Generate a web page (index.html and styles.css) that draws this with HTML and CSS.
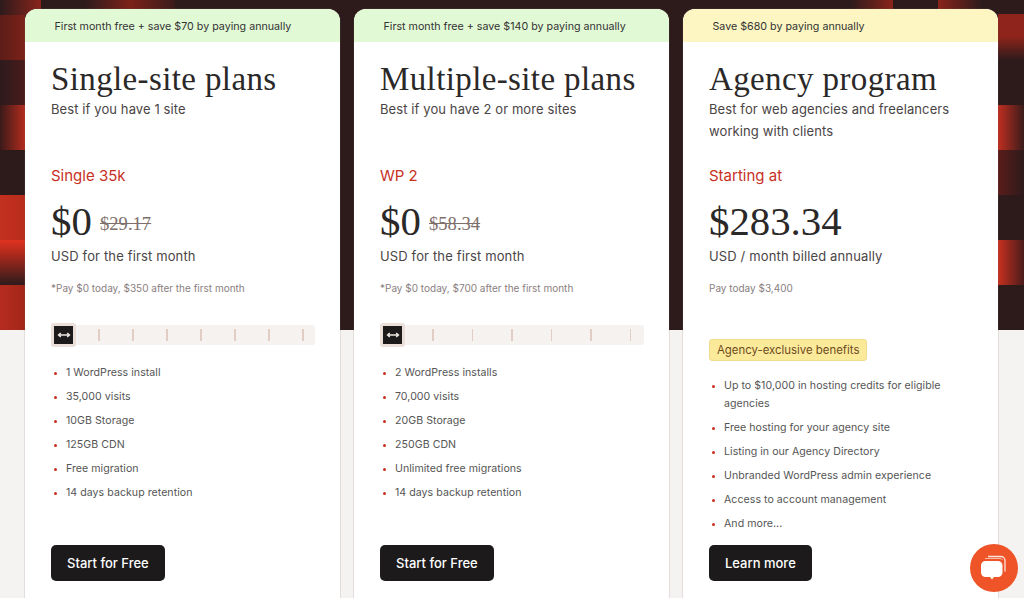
FILE: index.html
```html
<!DOCTYPE html>
<html lang="en">
<head>
<meta charset="utf-8">
<title>Pricing plans</title>
<link rel="stylesheet" href="styles.css">
</head>
<body>
<div class="hero-bg"></div>
<main class="plans">
  <section class="card">
    <p class="banner banner-green">First month free + save $70 by paying annually</p>
    <div class="body">
      <h2 class="title">Single-site plans</h2>
      <p class="sub">Best if you have 1 site</p>
      <p class="label">Single 35k</p>
      <p class="price">$0 <s class="was">$29.17</s></p>
      <p class="period">USD for the first month</p>
      <p class="note">*Pay $0 today, $350 after the first month</p>
      <div class="slider">
        <span class="thumb"><svg width="14" height="8" viewBox="0 0 14 8"><path d="M2.5 4h9M3.800 2 1.500 4l2.300 2M10.200 2l2.300 2-2.300 2" fill="none" stroke="#efe6e1" stroke-width="1.4"/></svg></span>
        <span class="ticks"><i></i><i></i><i></i><i></i><i></i><i></i><i></i></span>
      </div>
      <ul class="features">
        <li>1 WordPress install</li>
        <li>35,000 visits</li>
        <li>10GB Storage</li>
        <li>125GB CDN</li>
        <li>Free migration</li>
        <li>14 days backup retention</li>
      </ul>
      <a class="cta">Start for Free</a>
    </div>
  </section>
  <section class="card">
    <p class="banner banner-green">First month free + save $140 by paying annually</p>
    <div class="body">
      <h2 class="title">Multiple-site plans</h2>
      <p class="sub">Best if you have 2 or more sites</p>
      <p class="label">WP 2</p>
      <p class="price">$0 <s class="was">$58.34</s></p>
      <p class="period">USD for the first month</p>
      <p class="note">*Pay $0 today, $700 after the first month</p>
      <div class="slider">
        <span class="thumb"><svg width="14" height="8" viewBox="0 0 14 8"><path d="M2.5 4h9M3.800 2 1.500 4l2.300 2M10.200 2l2.300 2-2.300 2" fill="none" stroke="#efe6e1" stroke-width="1.4"/></svg></span>
        <span class="ticks ticks-wide"><i></i><i></i><i></i><i></i><i></i><i></i></span>
      </div>
      <ul class="features">
        <li>2 WordPress installs</li>
        <li>70,000 visits</li>
        <li>20GB Storage</li>
        <li>250GB CDN</li>
        <li>Unlimited free migrations</li>
        <li>14 days backup retention</li>
      </ul>
      <a class="cta">Start for Free</a>
    </div>
  </section>
  <section class="card">
    <p class="banner banner-yellow">Save $680 by paying annually</p>
    <div class="body">
      <h2 class="title">Agency program</h2>
      <p class="sub">Best for web agencies and freelancers working with clients</p>
      <p class="label">Starting at</p>
      <p class="price">$283.34</p>
      <p class="period">USD / month billed annually</p>
      <p class="note">Pay today $3,400</p>
      <div class="badge-row"><span class="badge">Agency-exclusive benefits</span></div>
      <ul class="features features-agency">
        <li>Up to $10,000 in hosting credits for eligible agencies</li>
        <li>Free hosting for your agency site</li>
        <li>Listing in our Agency Directory</li>
        <li>Unbranded WordPress admin experience</li>
        <li>Access to account management</li>
        <li>And more...</li>
      </ul>
      <a class="cta">Learn more</a>
    </div>
  </section>
</main>
<button class="chat" aria-label="Chat">
  <svg width="30" height="30" viewBox="0 0 30 30">
    <path d="M9 3.500h13a4 4 0 0 1 4 4v11" fill="none" stroke="#fff" stroke-width="1.3" opacity=".85"/>
    <path d="M6 5.500h15a3 3 0 0 1 2.500 1.500" fill="none" stroke="#fff" stroke-width="1" opacity=".6"/>
    <path d="M6.500 8h12.500a4.500 4.500 0 0 1 4.500 4.500v7a4.500 4.500 0 0 1-4.500 4.500h-4l-2 2.500-2-2.500h-4.500a4.500 4.500 0 0 1-4.500-4.500v-7a4.500 4.500 0 0 1 4.500-4.500z" fill="#fff"/>
  </svg>
</button>
</body>
</html>
```
FILE: styles.css
```css
* { box-sizing: border-box; }
html, body { margin: 0; height: 598px; overflow: hidden; }
body {
  position: relative;
  background: #f5f3f1;
  font-family: Inter, "Liberation Sans", sans-serif;
  color: #4a4545;
}
p, h2, ul { margin: 0; padding: 0; }

.hero-bg {
  position: absolute;
  top: 0; left: 0; right: 0;
  height: 330px;
  background-color: #2d1b1c;
  background-repeat: no-repeat;
  background-image:
    linear-gradient(to right, #2d1b1c, #8a241b),
    linear-gradient(to right, #2d1b1c, #7c2219),
    linear-gradient(to right, #7c2219, #3a1b1b),
    linear-gradient(to right, #5c1d18, #7c2219),
    linear-gradient(to right, #2d1b1c, #4a1c1b),
    linear-gradient(to right, #3a1a1a, #b42c1e),
    linear-gradient(to right, #c4301f, #b82c1c),
    linear-gradient(to bottom, #e0321f, #b02a1c 30%, #2d1b1c),
    linear-gradient(to right, #b52c1f, #a32619),
    linear-gradient(to right, #2d1b1c, #8a241b),
    linear-gradient(to right, #8a241b, #2d1b1c),
    linear-gradient(to bottom, #8e241b 50%, #2d1b1c),
    linear-gradient(to right, #c02e1f, #3a1c1c),
    linear-gradient(to right, #5a1c1a, #2d1b1c),
    linear-gradient(to right, #c8301f, #4a1c1b);
  background-size:
    41px 15px,
    45px 10px,
    45px 10px,
    25px 45px,
    25px 45px,
    25px 45px,
    25px 45px,
    25px 45px,
    25px 45px,
    43px 10px,
    44px 10px,
    26px 46px,
    26px 45px,
    26px 45px,
    26px 45px;
  background-position:
    0 0,
    85px 0,
    130px 0,
    0 15px,
    0 60px,
    0 105px,
    0 195px,
    0 240px,
    0 285px,
    850px 0,
    938px 0,
    998px 14px,
    998px 105px,
    998px 150px,
    998px 240px;
}

.plans {
  position: relative;
  display: grid;
  grid-template-columns: repeat(3, 315px);
  gap: 14px;
  padding: 9px 0 0 25px;
}
.card {
  height: 640px;
  background: #fff;
  border-radius: 12px 12px 0 0;
  overflow: hidden;
  display: flex;
  flex-direction: column;
  box-shadow: 0 0 0 1px rgba(120, 100, 95, .14);
}
.banner {
  height: 33px;
  flex: none;
  padding-left: 29.500px;
  font-size: 10.700px;
  line-height: 35px;
  color: #333;
}
.banner-green { background: #e2f9d6; }
.banner-yellow { background: #fdf6c2; }

.body {
  flex: 1;
  display: flex;
  flex-direction: column;
  padding: 0 26px 68px;
}
.title {
  margin-top: 18px;
  font-family: "Liberation Serif", serif;
  font-weight: 400;
  font-size: 33px;
  line-height: 38px;
  letter-spacing: .38px;
  color: #2b2828;
}
.sub {
  height: 68px;
  font-size: 13px;
  line-height: 22px;
  letter-spacing: .1px;
  color: #4a4545;
}
.label {
  font-size: 15px;
  line-height: 20px;
  color: #c8301f;
}
.price {
  margin-top: 13px;
  font-family: "Liberation Serif", serif;
  font-size: 40.800px;
  line-height: 46px;
  color: #2b2828;
}
.was {
  margin-left: -2px;
  font-size: 18.600px;
  line-height: 1;
  vertical-align: 5px;
  color: #7d6f6a;
}
.period {
  margin-top: 1px;
  font-size: 13px;
  line-height: 20px;
  letter-spacing: .14px;
  color: #4a4545;
}
.note {
  margin-top: 14px;
  font-size: 10px;
  line-height: 16px;
  color: #8a8080;
}

.slider {
  display: flex;
  align-items: center;
  height: 20px;
  width: 264px;
  margin-top: 29px;
  background: #f6f2f0;
  border-radius: 3px;
}
.thumb {
  flex: none;
  width: 25px;
  height: 24px;
  display: flex;
  align-items: center;
  justify-content: center;
  background: #1c1a1a;
  border: 3px solid #eadfd9;
  border-radius: 3px;
}
.ticks { display: flex; gap: 32.500px; margin-left: 22px; }
.ticks-wide { gap: 38.100px; margin-left: 27px; }
.ticks i { display: block; width: 1.500px; height: 12px; background: #e2cdc4; }

.features {
  list-style: none;
  margin-top: 19px;
  font-size: 10.600px;
  line-height: 18px;
  letter-spacing: .04px;
  color: #555;
}
.features li {
  position: relative;
  padding-left: 15px;
  margin-bottom: 6px;
}
.features li::before {
  content: "";
  position: absolute;
  left: 3px;
  top: 8px;
  width: 3px;
  height: 3px;
  border-radius: 50%;
  background: #c8301f;
}
.features-agency { margin-top: 16px; }

.badge-row { margin-top: 43px; display: flex; }
.badge {
  height: 22px;
  padding: 0 7px;
  font-size: 11.400px;
  line-height: 21px;
  color: #6e4a1e;
  background: #fbea9a;
  border: 1px solid #f0dc8c;
  border-radius: 3px;
}

.cta {
  margin-top: auto;
  align-self: flex-start;
  height: 36px;
  padding: 0 16px;
  font-size: 13px;
  font-weight: 500;
  line-height: 36px;
  color: #fff;
  background: #1c1a1a;
  border-radius: 5px;
}

.chat {
  position: absolute;
  left: 970px;
  top: 544px;
  width: 48px;
  height: 48px;
  padding: 0;
  border: 0;
  border-radius: 50%;
  background: #ee5427;
  display: flex;
  align-items: center;
  justify-content: center;
}
```
